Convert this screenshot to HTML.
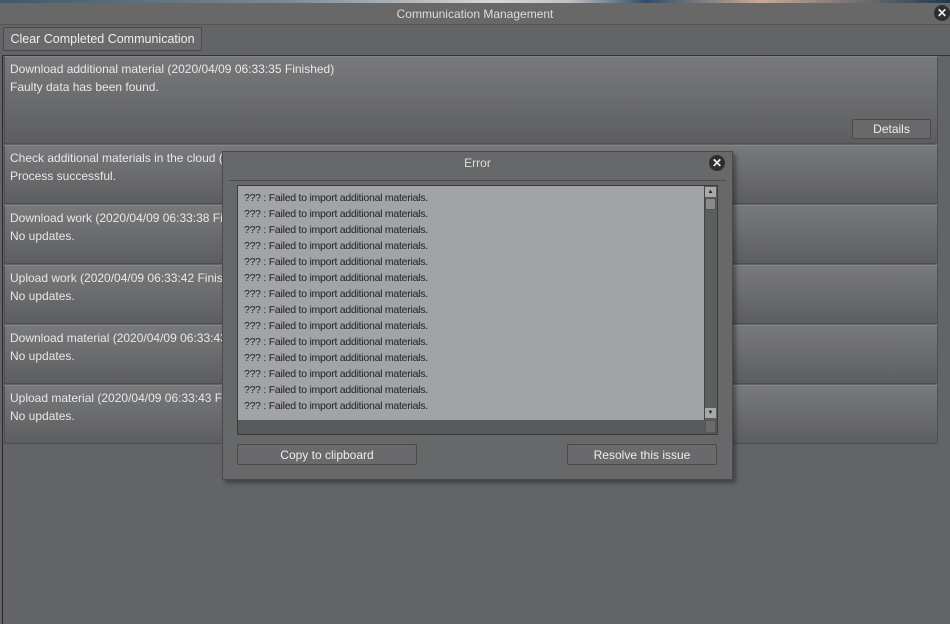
<!DOCTYPE html>
<html><head><style>
*{margin:0;padding:0;box-sizing:border-box}
body{width:950px;height:624px;overflow:hidden;background:#636468;font-family:"Liberation Sans",sans-serif;position:relative;color:#e8e8e8;font-size:12px}
.abs{position:absolute}
.top{left:0;top:0;width:950px;height:3px;background:linear-gradient(90deg,#3a5a70,#7a8a96 30%,#d8d8d8 52%,#c0c0c0 60%,#2a5070 68%,#d0a890 80%,#1a3a55)}
.title{left:0;top:3px;width:950px;height:22px;background:#686868;border-bottom:1px solid #555;text-align:center;line-height:22px;font-size:12px;color:#ddd}
.close{width:16px;height:16px;border-radius:50%;background:#2e2e2e;color:#eee;font-weight:bold;font-size:12px;line-height:16px;text-align:center}
.btn{border:1px solid #4a4a4a;border-radius:2px;background:#6a6a6c;color:#eee;text-align:center;font-size:12px}
.item{left:4px;width:934px;background:linear-gradient(#78797b,#5d5e60);border:1px solid #4e4f51;border-top-color:#858687;padding:3px 0 0 5px;line-height:18px;font-size:12px}
.dlg{left:222px;top:151px;width:511px;height:329px;background:#67686a;border:1px solid #4a4a4a;box-shadow:3px 3px 4px rgba(0,0,0,.35)}
.lst{left:14px;top:33px;width:481px;height:250px;background:#58595b;border:1px solid #3a3a3a}
.txt{left:0;top:0;width:466px;height:234px;background:#a1a3a7;color:#222;font-size:10.5px;letter-spacing:-0.25px;line-height:16px;padding:4px 0 0 6px;overflow:hidden}
</style></head><body>
<div class="abs top"></div>
<div class="abs title">Communication Management</div>
<div class="abs close" style="left:934px;top:5px">✕</div>
<div class="abs" style="left:2px;top:56px;width:1px;height:568px;background:#2a2a2a"></div>
<div class="abs btn" style="left:3px;top:27px;width:199px;height:24px;line-height:22px;font-size:12.5px">Clear Completed Communication</div>
<div class="abs" style="left:2px;top:55px;width:948px;height:1px;background:#333"></div>
<div class="abs item" style="top:56px;height:88px">Download additional material (2020/04/09 06:33:35 Finished)<br>Faulty data has been found.</div>
<div class="abs btn" style="left:852px;top:119px;width:79px;height:20px;line-height:19px">Details</div>
<div class="abs item" style="top:145px;height:59px">Check additional materials in the cloud (2020/04/09 06:33:36 Finished)<br>Process successful.</div>
<div class="abs item" style="top:205px;height:59px">Download work (2020/04/09 06:33:38 Finished)<br>No updates.</div>
<div class="abs item" style="top:265px;height:59px">Upload work (2020/04/09 06:33:42 Finished)<br>No updates.</div>
<div class="abs item" style="top:325px;height:59px">Download material (2020/04/09 06:33:43 Finished)<br>No updates.</div>
<div class="abs item" style="top:385px;height:59px">Upload material (2020/04/09 06:33:43 Finished)<br>No updates.</div>
<div class="abs dlg">
 <div class="abs" style="left:0;top:0;width:509px;height:22px;text-align:center;line-height:22px;color:#ddd">Error</div>
 <div class="abs" style="left:6px;top:28px;width:497px;height:1px;background:#4c4c4c"></div>
 <div class="abs close" style="left:486px;top:3px">✕</div>
 <div class="abs lst">
  <div class="abs txt">
???&nbsp;: Failed to import additional materials.<br>???&nbsp;: Failed to import additional materials.<br>???&nbsp;: Failed to import additional materials.<br>???&nbsp;: Failed to import additional materials.<br>???&nbsp;: Failed to import additional materials.<br>???&nbsp;: Failed to import additional materials.<br>???&nbsp;: Failed to import additional materials.<br>???&nbsp;: Failed to import additional materials.<br>???&nbsp;: Failed to import additional materials.<br>???&nbsp;: Failed to import additional materials.<br>???&nbsp;: Failed to import additional materials.<br>???&nbsp;: Failed to import additional materials.<br>???&nbsp;: Failed to import additional materials.<br>???&nbsp;: Failed to import additional materials.
  </div>
  <div class="abs" style="left:466px;top:0;width:13px;height:234px;background:#5d5e60;border-left:1px solid #444"></div>
  <div class="abs" style="left:467px;top:1px;width:11px;height:10px;background:#a8a9ab;font-size:6px;color:#222;text-align:center;line-height:10px">▲</div>
  <div class="abs" style="left:467px;top:12px;width:11px;height:12px;background:#8a8b8d;border:1px solid #555;border-radius:2px"></div>
  <div class="abs" style="left:467px;top:222px;width:11px;height:10px;background:#a8a9ab;font-size:6px;color:#222;text-align:center;line-height:10px">▼</div>
  <div class="abs" style="left:467px;top:234px;width:11px;height:13px;background:#6a6b6d;border:1px solid #555"></div>
 </div>
 <div class="abs btn" style="left:14px;top:292px;width:180px;height:21px;line-height:20px">Copy to clipboard</div>
 <div class="abs btn" style="left:344px;top:292px;width:150px;height:21px;line-height:20px">Resolve this issue</div>
</div>
</body></html>
